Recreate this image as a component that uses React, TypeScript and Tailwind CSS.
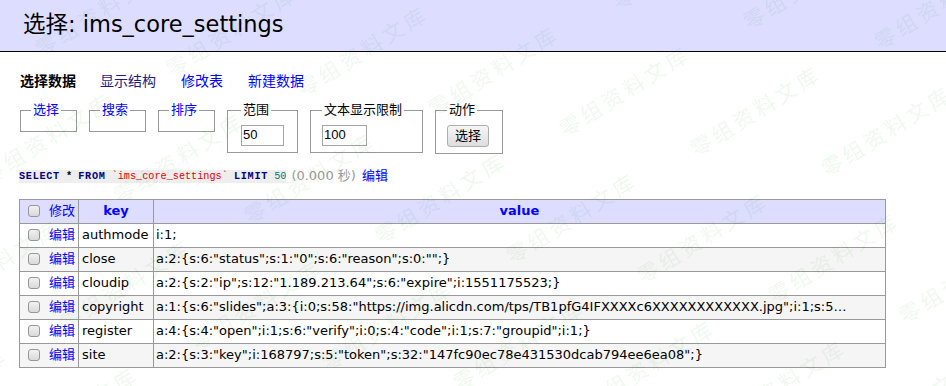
import React from 'react';

const rows = [
  { key: 'authmode', value: 'i:1;' },
  { key: 'close', value: 'a:2:{s:6:"status";s:1:"0";s:6:"reason";s:0:"";}' },
  { key: 'cloudip', value: 'a:2:{s:2:"ip";s:12:"1.189.213.64";s:6:"expire";i:1551175523;}' },
  {
    key: 'copyright',
    value: 'a:1:{s:6:"slides";a:3:{i:0;s:58:"https://img.alicdn.com/tps/TB1pfG4IFXXXXc6XXXXXXXXXXXX.jpg";i:1;s:5…',
  },
  { key: 'register', value: 'a:4:{s:4:"open";i:1;s:6:"verify";i:0;s:4:"code";i:1;s:7:"groupid";i:1;}' },
  { key: 'site', value: 'a:2:{s:3:"key";i:168797;s:5:"token";s:32:"147fc90ec78e431530dcab794ee6ea08";}' },
];

// 水印网格：起点 + 两个基向量
const marks: { x: number; y: number }[] = [];
for (let i = -7; i <= 5; i++) {
  for (let j = -2; j <= 3; j++) {
    const x = 567 + i * 131 - j * 53;
    const y = 140 + i * 20 + j * 127;
    if (x > -170 && x < 946 && y > 0 && y < 480) marks.push({ x, y });
  }
}

function Check() {
  return (
    <span className="inline-block h-[12px] w-[12px] shrink-0 rounded-[3px] border border-[#979797] bg-gradient-to-b from-[#f2f2f2] to-[#d9d9d9]" />
  );
}

export default function App() {
  return (
    <div className="relative h-[386px] w-[946px] overflow-hidden bg-white font-['DejaVu_Sans','Noto_Sans_CJK_SC',sans-serif] text-[13px] leading-[1.25] text-black">
      {/* 标题 */}
      <h2 className="h-[52px] border-b border-black bg-[#ddf] pl-[23px] pt-[10px] text-[22.5px] font-normal leading-[28px]">
        选择: ims_core_settings
      </h2>

      <div className="pl-[20px]">
        {/* 导航 */}
        <p className="mt-[21px] flex text-[14px] leading-[16px]">
          <span className="font-bold">选择数据</span>
          <span className="ml-[24px] text-[#1c1c80]">显示结构</span>
          <span className="ml-[25px] text-[#00f]">修改表</span>
          <span className="ml-[25px] text-[#00f]">新建数据</span>
        </p>

        {/* 过滤条件 */}
        <div className="mt-[13px] flex items-start gap-[12px]">
          {['选择', '搜索', '排序'].map((t) => (
            <fieldset key={t} className="w-[57px] border border-[#999] px-[10px] py-[6.5px]">
              <legend className="px-[2px] text-[#00f]">{t}</legend>
              <div className="h-0" />
            </fieldset>
          ))}
          <fieldset className="w-[71px] border border-[#999] px-[13px] py-[6.5px]">
            <legend className="px-[2px]">范围</legend>
            <div className="flex h-[21px] w-[43px] items-center border border-[#a5a5a5] pl-[1px] font-['Liberation_Sans',sans-serif] text-[13px]">
              50
            </div>
          </fieldset>
          <fieldset className="w-[113px] border border-[#999] px-[11px] py-[6.5px]">
            <legend className="px-[2px]">文本显示限制</legend>
            <div className="flex h-[21px] w-[45px] items-center border border-[#a5a5a5] pl-[1px] font-['Liberation_Sans',sans-serif] text-[13px]">
              100
            </div>
          </fieldset>
          <fieldset className="w-[68px] border border-[#999] px-[11px] py-[6.5px]">
            <legend className="px-[2px]">动作</legend>
            <div className="flex h-[22px] w-[42px] items-center justify-center rounded-[3px] border border-[#adadad] bg-gradient-to-b from-[#f6f6f6] to-[#dddddd]">
              选择
            </div>
          </fieldset>
        </div>
      </div>

      <div className="pl-[19px]">
        {/* SQL */}
        <p className="mt-[14px] flex items-center whitespace-nowrap">
          <code className="bg-[#eee] font-['Liberation_Mono',monospace] text-[10.2px] font-bold leading-[13px]">
            <span className="tracking-[0.7px] text-[#000080]">SELECT</span> *{' '}
            <span className="tracking-[0.7px] text-[#000080]">FROM</span>{' '}
            <span className="font-normal text-[#e00]">`ims_core_settings`</span>{' '}
            <span className="tracking-[0.7px] text-[#000080]">LIMIT</span>{' '}
            <span className="font-normal text-[#008080]">50</span>
          </code>
          <span className="ml-[5px] text-[#999]">(0.000 秒)</span>
          <span className="ml-[6px] text-[#00f]">编辑</span>
        </p>

        {/* 数据表 */}
        <table className="mt-[14px] w-[867px] table-fixed border-collapse whitespace-nowrap">
          <thead>
            <tr className="bg-[#ddf]">
              <th className="h-[24px] w-[59px] border border-[#999] pl-[8px] pr-[4px] text-left font-normal">
                <div className="flex items-center gap-[9px]">
                  <Check />
                  <span className="text-[#00f]">修改</span>
                </div>
              </th>
              <th className="w-[75px] border border-[#999] font-bold text-[#00f]">key</th>
              <th className="border border-[#999] font-bold text-[#00f]">value</th>
            </tr>
          </thead>
          <tbody>
            {rows.map((r, i) => (
              <tr key={r.key} className={i % 2 ? 'bg-[#f5f5f5]' : 'bg-white'}>
                <td className="h-[24px] border border-[#999] pl-[8px] pr-[4px]">
                  <div className="flex items-center gap-[9px]">
                    <Check />
                    <span className="text-[#00f]">编辑</span>
                  </div>
                </td>
                <td className="border border-[#999] px-[3px]">{r.key}</td>
                <td className="overflow-hidden border border-[#999] px-[2px]">{r.value}</td>
              </tr>
            ))}
          </tbody>
        </table>
      </div>

      {/* 水印，叠加不遮挡文字 */}
      <div className="pointer-events-none absolute inset-0 mix-blend-multiply">
        {marks.map((m, k) => (
          <span
            key={k}
            className="absolute origin-bottom-left -rotate-[32deg] whitespace-nowrap font-['Noto_Sans_CJK_SC',sans-serif] text-[21px] leading-[24px] tracking-[4px] text-[#f0f8f0]"
            style={{ left: m.x, top: m.y - 24 }}
          >
            零组资料文库
          </span>
        ))}
      </div>
    </div>
  );
}
